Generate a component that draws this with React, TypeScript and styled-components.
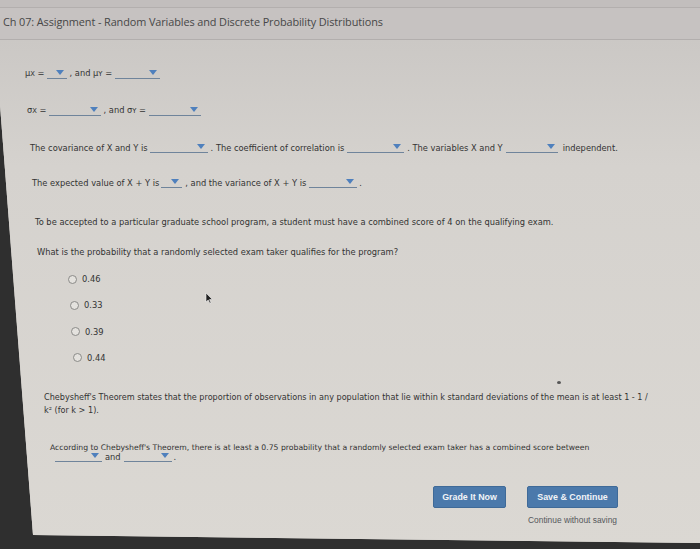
import React from 'react';
import styled, { createGlobalStyle } from 'styled-components';

const GlobalStyle = createGlobalStyle`
  html, body {
    margin: 0;
    padding: 0;
    background: #2f2f2f;
  }
  body {
    width: 700px;
    height: 549px;
    overflow: hidden;
  }
`;

const Screen = styled.div`
  width: 700px;
  height: 549px;
  background: linear-gradient(100deg, #d2cfca 0%, #d9d6d1 45%, #dedbd6 100%);
  clip-path: polygon(0 0, 100% 0, 100% 543px, 33px 535px, 0 105px);
  font-family: 'DejaVu Sans', Verdana, sans-serif;
  color: #333;
  display: flex;
  flex-direction: column;
`;

const TopStrip = styled.div`
  height: 7px;
  background: #c2bebd;
  border-bottom: 1px solid #b3afae;
`;

const Header = styled.div`
  height: 32px;
  display: flex;
  align-items: center;
  padding: 0 0 5px 3px;
  box-sizing: border-box;
  background: #c6c2c1;
  border-bottom: 1px solid #b2aead;
  font-family: 'Open Sans', sans-serif;
  font-size: 10.9px;
  color: #474747;
  letter-spacing: -0.1px;
`;

const Body = styled.div`
  position: relative;
  flex: 1;
  display: flex;
  flex-direction: column;
  background: linear-gradient(180deg, #cbc8c5 0%, #d5d2ce 25%, #dbd8d3 100%);
`;

const Line = styled.div<{ $indent: number; $top: number }>`
  display: flex;
  align-items: flex-end;
  margin-top: ${({ $top }) => $top}px;
  padding-left: ${({ $indent }) => $indent}px;
  font-size: 8.3px;
  line-height: 10px;
  white-space: nowrap;
`;

const Text = styled.span<{ $gap?: number }>`
  margin: 0 ${({ $gap }) => $gap ?? 3}px;
`;

const Blank = styled.span<{ $w: number }>`
  position: relative;
  display: inline-block;
  width: ${({ $w }) => $w}px;
  height: 10px;
  border-bottom: 1px solid #6f849b;

  &::after {
    content: '';
    position: absolute;
    right: 3px;
    bottom: 3px;
    border-left: 4.5px solid transparent;
    border-right: 4.5px solid transparent;
    border-top: 5px solid #4f80bd;
  }
`;

const Sub = styled.span`
  font-size: 6.8px;
`;

const Paragraph = styled.div<{ $indent: number; $top: number; $width: number; $size?: number }>`
  margin-top: ${({ $top }) => $top}px;
  padding-left: ${({ $indent }) => $indent}px;
  width: ${({ $width }) => $width}px;
  font-size: ${({ $size }) => $size ?? 8.3}px;
  line-height: 13px;
`;

const Options = styled.div`
  display: flex;
  flex-direction: column;
  gap: 16.3px;
  margin-top: 15px;
  padding-left: 68px;
`;

const Option = styled.label<{ $shift: number }>`
  display: flex;
  align-items: center;
  gap: 5px;
  padding-left: ${({ $shift }) => $shift}px;
  font-size: 8.3px;
  line-height: 10px;
`;

const Radio = styled.span`
  width: 7px;
  height: 7px;
  border-radius: 50%;
  border: 1px solid #8a8a88;
  background: #e4e2de;
`;

const Actions = styled.div`
  display: flex;
  justify-content: flex-end;
  align-items: flex-start;
  gap: 21px;
  margin-top: 24px;
  padding-right: 82px;
`;

const ButtonStack = styled.div`
  display: flex;
  flex-direction: column;
  align-items: center;
  gap: 7px;
`;

const Button = styled.button<{ $w: number }>`
  width: ${({ $w }) => $w}px;
  height: 22px;
  border: 1px solid #3f6a98;
  border-radius: 2px;
  background: #4b79ab;
  color: #f2f4f7;
  font-family: 'Liberation Sans', Arial, sans-serif;
  font-weight: bold;
  font-size: 8.9px;
  padding: 0;
`;

const LinkText = styled.span`
  font-family: 'Liberation Sans', Arial, sans-serif;
  font-size: 8.4px;
  color: #55575b;
`;

const Cursor = styled.svg`
  position: absolute;
  left: 205px;
  top: 252px;
`;

const Speck = styled.span`
  position: absolute;
  left: 557px;
  top: 341px;
  width: 4px;
  height: 3px;
  border-radius: 50%;
  background: #555;
`;

const App: React.FC = () => {
  return (
    <>
      <GlobalStyle />
      <Screen>
        <TopStrip />
        <Header>Ch 07: Assignment - Random Variables and Discrete Probability Distributions</Header>
        <Body>
          <Line $indent={25} $top={28}>
            <Text $gap={0}>
              μ<Sub>X</Sub> =
            </Text>
            <Text $gap={1} />
            <Blank $w={20} />
            <Text>
              , and μ<Sub>Y</Sub> =
            </Text>
            <Blank $w={45} />
          </Line>

          <Line $indent={27} $top={26}>
            <Text $gap={0}>
              σ<Sub>X</Sub> =
            </Text>
            <Text $gap={1} />
            <Blank $w={52} />
            <Text>
              , and σ<Sub>Y</Sub> =
            </Text>
            <Blank $w={52} />
          </Line>

          <Line $indent={30} $top={26}>
            <Text $gap={0}>The covariance of X and Y is</Text>
            <Text $gap={1} />
            <Blank $w={58} />
            <Text>. The coefficient of correlation is</Text>
            <Blank $w={57} />
            <Text>. The variables X and Y</Text>
            <Blank $w={52} />
            <Text $gap={5}>independent.</Text>
          </Line>

          <Line $indent={32} $top={24}>
            <Text $gap={0}>The expected value of X + Y is</Text>
            <Text $gap={1} />
            <Blank $w={21} />
            <Text>, and the variance of X + Y is</Text>
            <Blank $w={48} />
            <Text $gap={2}>.</Text>
          </Line>

          <Paragraph $indent={35} $top={28} $width={640}>
            To be accepted to a particular graduate school program, a student must have a combined score of 4 on the
            qualifying exam.
          </Paragraph>

          <Paragraph $indent={37} $top={17} $width={640}>
            What is the probability that a randomly selected exam taker qualifies for the program?
          </Paragraph>

          <Options>
            <Option $shift={0}>
              <Radio />
              0.46
            </Option>
            <Option $shift={2}>
              <Radio />
              0.33
            </Option>
            <Option $shift={3}>
              <Radio />
              0.39
            </Option>
            <Option $shift={5}>
              <Radio />
              0.44
            </Option>
          </Options>

          <Paragraph $indent={44} $top={28} $width={608} $size={8.1}>
            Chebysheff's Theorem states that the proportion of observations in any population that lie within k standard
            deviations of the mean is at least 1 - 1 / k² (for k &gt; 1).
          </Paragraph>

          <Paragraph $indent={50} $top={24} $width={620} $size={7.7}>
            According to Chebysheff's Theorem, there is at least a 0.75 probability that a randomly selected exam taker has
            a combined score between
          </Paragraph>

          <Line $indent={55} $top={-3}>
            <Blank $w={47} />
            <Text>and</Text>
            <Blank $w={48} />
            <Text $gap={2}>.</Text>
          </Line>

          <Actions>
            <Button $w={73}>Grade It Now</Button>
            <ButtonStack>
              <Button $w={91}>Save &amp; Continue</Button>
              <LinkText>Continue without saving</LinkText>
            </ButtonStack>
          </Actions>

          <Cursor width="8" height="12" viewBox="0 0 8 12">
            <path d="M1 1 L1 10 L3.2 8 L4.8 11.3 L6 10.8 L4.5 7.6 L7.3 7.4 Z" fill="#222" stroke="#f4f4f4" strokeWidth="0.6" />
          </Cursor>
          <Speck />
        </Body>
      </Screen>
    </>
  );
};

export default App;
